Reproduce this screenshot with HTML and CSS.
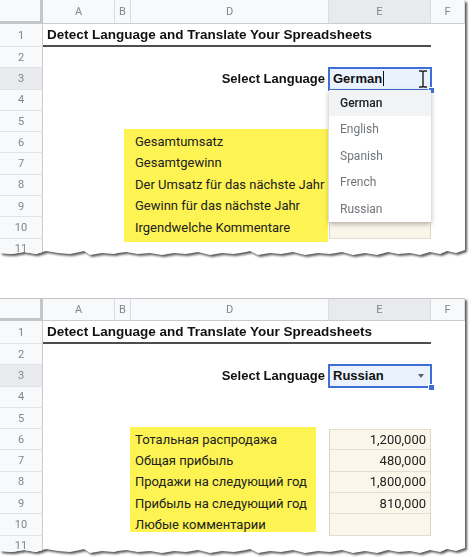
FILE: index.html
```html
<!DOCTYPE html>
<html lang="en">
<head>
  <meta charset="UTF-8">
  <meta name="viewport" content="width=device-width, initial-scale=1.0">
  <title>Detect Language and Translate</title>
  <link rel="stylesheet" href="styles.css">
</head>
<body>
  <!-- first shot: dropdown open -->
  <div class="shot shot-top">
    <div class="paper">
      <div class="sheet">
        <div class="row head">
          <div class="cell corner"></div>
          <div class="cell">A</div>
          <div class="cell">B</div>
          <div class="cell">D</div>
          <div class="cell on">E</div>
          <div class="cell">F</div>
        </div>
        <div class="row r1">
          <div class="cell num">1</div>
          <div class="cell title">Detect Language and Translate Your Spreadsheets</div>
          <div class="cell"></div>
        </div>
        <div class="row">
          <div class="cell num">2</div>
          <div class="cell"></div><div class="cell"></div><div class="cell"></div><div class="cell"></div><div class="cell"></div>
        </div>
        <div class="row">
          <div class="cell num on">3</div>
          <div class="cell"></div><div class="cell"></div>
          <div class="cell label">Select Language</div>
          <div class="cell picked">
            <span class="typed">German</span>
            <svg class="ibeam" width="10" height="18" viewBox="0 0 10 18">
              <path d="M1 1h3l1 1 1-1h3M5 2v14M1 17h3l1-1 1 1h3" fill="none" stroke="#222" stroke-width="1.4"/>
            </svg>
          </div>
          <div class="cell"></div>
        </div>
        <div class="row">
          <div class="cell num">4</div>
          <div class="cell"></div><div class="cell"></div><div class="cell"></div><div class="cell"></div><div class="cell"></div>
        </div>
        <div class="row">
          <div class="cell num">5</div>
          <div class="cell"></div><div class="cell"></div><div class="cell"></div><div class="cell"></div><div class="cell"></div>
        </div>
        <div class="row">
          <div class="cell num">6</div>
          <div class="cell"></div><div class="cell"></div><div class="cell"></div><div class="cell beige first"></div><div class="cell"></div>
        </div>
        <div class="row">
          <div class="cell num">7</div>
          <div class="cell"></div><div class="cell"></div><div class="cell"></div><div class="cell beige"></div><div class="cell"></div>
        </div>
        <div class="row">
          <div class="cell num">8</div>
          <div class="cell"></div><div class="cell"></div><div class="cell"></div><div class="cell beige"></div><div class="cell"></div>
        </div>
        <div class="row">
          <div class="cell num">9</div>
          <div class="cell"></div><div class="cell"></div><div class="cell"></div><div class="cell beige"></div><div class="cell"></div>
        </div>
        <div class="row">
          <div class="cell num">10</div>
          <div class="cell"></div><div class="cell"></div><div class="cell"></div><div class="cell beige"></div><div class="cell"></div>
        </div>
        <div class="row">
          <div class="cell num">11</div>
          <div class="cell"></div><div class="cell"></div><div class="cell"></div><div class="cell"></div><div class="cell"></div>
        </div>
      </div>

      <div class="note note-de">
        <div>Gesamtumsatz</div>
        <div>Gesamtgewinn</div>
        <div>Der Umsatz für das nächste Jahr</div>
        <div>Gewinn für das nächste Jahr</div>
        <div>Irgendwelche Kommentare</div>
      </div>

      <ul class="menu">
        <li class="hover">German</li>
        <li>English</li>
        <li>Spanish</li>
        <li>French</li>
        <li>Russian</li>
      </ul>
    </div>
  </div>

  <!-- second shot: Russian chosen -->
  <div class="shot shot-bottom">
    <div class="paper">
      <div class="sheet">
        <div class="row head">
          <div class="cell corner"></div>
          <div class="cell">A</div>
          <div class="cell">B</div>
          <div class="cell">D</div>
          <div class="cell on">E</div>
          <div class="cell">F</div>
        </div>
        <div class="row r1">
          <div class="cell num">1</div>
          <div class="cell title">Detect Language and Translate Your Spreadsheets</div>
          <div class="cell"></div>
        </div>
        <div class="row">
          <div class="cell num">2</div>
          <div class="cell"></div><div class="cell"></div><div class="cell"></div><div class="cell"></div><div class="cell"></div>
        </div>
        <div class="row">
          <div class="cell num on">3</div>
          <div class="cell"></div><div class="cell"></div>
          <div class="cell label">Select Language</div>
          <div class="cell picked">
            <span>Russian</span>
            <span class="arrow"></span>
          </div>
          <div class="cell"></div>
        </div>
        <div class="row">
          <div class="cell num">4</div>
          <div class="cell"></div><div class="cell"></div><div class="cell"></div><div class="cell"></div><div class="cell"></div>
        </div>
        <div class="row">
          <div class="cell num">5</div>
          <div class="cell"></div><div class="cell"></div><div class="cell"></div><div class="cell"></div><div class="cell"></div>
        </div>
        <div class="row">
          <div class="cell num">6</div>
          <div class="cell"></div><div class="cell"></div><div class="cell"></div><div class="cell beige first value">1,200,000</div><div class="cell"></div>
        </div>
        <div class="row">
          <div class="cell num">7</div>
          <div class="cell"></div><div class="cell"></div><div class="cell"></div><div class="cell beige value">480,000</div><div class="cell"></div>
        </div>
        <div class="row">
          <div class="cell num">8</div>
          <div class="cell"></div><div class="cell"></div><div class="cell"></div><div class="cell beige value">1,800,000</div><div class="cell"></div>
        </div>
        <div class="row">
          <div class="cell num">9</div>
          <div class="cell"></div><div class="cell"></div><div class="cell"></div><div class="cell beige value">810,000</div><div class="cell"></div>
        </div>
        <div class="row">
          <div class="cell num">10</div>
          <div class="cell"></div><div class="cell"></div><div class="cell"></div><div class="cell beige value"></div><div class="cell"></div>
        </div>
        <div class="row">
          <div class="cell num">11</div>
          <div class="cell"></div><div class="cell"></div><div class="cell"></div><div class="cell"></div><div class="cell"></div>
        </div>
      </div>

      <div class="note note-ru">
        <div>Тотальная распродажа</div>
        <div>Общая прибыль</div>
        <div>Продажи на следующий год</div>
        <div>Прибыль на следующий год</div>
        <div>Любые комментарии</div>
      </div>
    </div>
  </div>
</body>
</html>
```

FILE: styles.css
```css
body {
  margin: 0;
  padding: 0;
  background: #fff;
  color: #202124;
  font-family: Roboto, Arial, sans-serif;
  overflow: hidden;
}
.shot {
  width: 474px;
  height: 258px;
  filter: drop-shadow(2px 2px 1px rgba(0, 0, 0, 0.65));
}
.shot-bottom {
  margin-top: 40px;
  height: 259px;
}
.paper {
  position: relative;
  width: 465px;
  height: 100%;
  background: #fff;
  overflow: hidden;
  clip-path: polygon(0 0, 465px 0, 465px 250px, 456px 253px, 447px 251px, 440px 254px, 430px 252px, 420px 255px, 410px 253px, 398px 254px, 388px 252px, 377px 255px, 365px 253px, 353px 255px, 342px 252px, 330px 254px, 318px 253px, 305px 255px, 293px 252px, 281px 254px, 270px 253px, 258px 255px, 250px 251px, 246px 252px, 234px 254px, 222px 253px, 210px 255px, 198px 252px, 186px 254px, 174px 253px, 162px 255px, 150px 253px, 138px 254px, 126px 252px, 118px 253px, 114px 254px, 102px 253px, 90px 255px, 84px 251px, 80px 252px, 70px 254px, 58px 253px, 46px 251px, 36px 254px, 24px 252px, 12px 254px, 0 253px);
}

/* grid (gridlines hidden in the data area) */
.row {
  display: grid;
  grid-template-columns: 43px 72px 16px 198px 102px 34px;
  height: 21.3px;
}
.r1 {
  grid-template-columns: 43px 388px 34px;
  height: 23px;
}
.cell {
  box-sizing: border-box;
  display: flex;
  align-items: center;
  font-size: 13px;
  white-space: nowrap;
  min-width: 0;
}
.head {
  height: 24px;
  background: #f8f9fa;
}
.shot-bottom .head {
  height: 22px;
  border-top: 1px solid #c4c6c8;
}
.head .cell {
  justify-content: center;
  font-size: 11px;
  color: #80868b;
  border-right: 1px solid #dadce0;
  border-bottom: 1px solid #c9cbcd;
}
.head .corner {
  border-right: 3px solid #c4c6c8;
  border-bottom: 3px solid #c4c6c8;
}
.head .on,
.num.on {
  background: #e8eaed;
}
.num {
  justify-content: center;
  background: #f8f9fa;
  font-size: 11px;
  color: #80868b;
  border-right: 1px solid #c9cbcd;
  border-bottom: 1px solid #e2e3e3;
}
.title {
  font-family: "Liberation Sans", Arial, sans-serif;
  font-weight: bold;
  font-size: 13.5px;
  color: #111;
  padding-left: 4px;
  border-bottom: 2px solid #4d4d4d;
}
.label {
  justify-content: flex-end;
  padding-right: 4px;
  font-family: "Liberation Sans", Arial, sans-serif;
  font-weight: bold;
  color: #111;
}
.picked {
  position: relative;
  background: #eaf2fd;
  outline: 2px solid #3f6fd6;
  outline-offset: -1px;
  padding-left: 4px;
  font-family: "Liberation Sans", Arial, sans-serif;
  font-weight: bold;
  color: #111;
}
.picked::after {
  content: "";
  position: absolute;
  right: -4px;
  bottom: -4px;
  width: 5px;
  height: 5px;
  background: #3f6fd6;
  border: 1px solid #fff;
}
.typed {
  border-right: 1px solid #111;
  padding-right: 1px;
  line-height: 15px;
}
.ibeam {
  position: absolute;
  right: 3px;
  top: 2px;
}
.arrow {
  position: absolute;
  right: 7px;
  top: 9px;
  border-left: 3.5px solid transparent;
  border-right: 3.5px solid transparent;
  border-top: 4px solid #5f6368;
}
.beige {
  background: #fcf5ea;
  border-left: 1px solid #dcd7cc;
  border-right: 1px solid #dcd7cc;
  border-bottom: 1px solid #e3ddd2;
}
.beige.first {
  border-top: 1px solid #e3ddd2;
}
.value {
  justify-content: flex-end;
  padding-right: 4px;
  color: #222;
}

/* yellow note over the sheet */
.note {
  position: absolute;
  background: #fdf352;
  font-size: 13px;
  color: #202124;
  white-space: nowrap;
}
.note-de {
  left: 124px;
  top: 129px;
  width: 193px;
  height: 111px;
  padding: 2px 0 0 11px;
  line-height: 21.4px;
}
.note-ru {
  left: 130px;
  top: 129px;
  width: 181px;
  height: 103px;
  padding: 2px 0 0 5px;
  line-height: 21.2px;
}

/* open validation dropdown */
.menu {
  position: absolute;
  left: 329px;
  top: 90px;
  width: 102px;
  margin: 0;
  padding: 0;
  list-style: none;
  background: #fff;
  box-shadow: 0 2px 5px rgba(0, 0, 0, 0.3);
}
.menu li {
  height: 26.4px;
  line-height: 26.4px;
  padding-left: 11px;
  font-size: 12px;
  color: #70757a;
}
.menu li.hover {
  background: #f1f3f4;
  color: #202124;
  font-weight: 500;
}
```
